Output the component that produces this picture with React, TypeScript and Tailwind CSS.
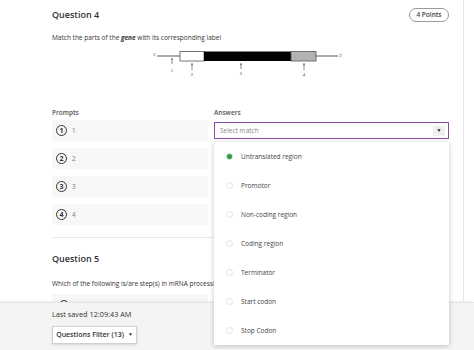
const PROMPTS = ['1', '2', '3', '4'];
const ANSWERS = [
  'Untranslated region',
  'Promotor',
  'Non-coding region',
  'Coding region',
  'Terminator',
  'Start codon',
  'Stop Codon',
];

const GeneDiagram = () => (
  <svg width="196" height="30" viewBox="0 0 196 30" className="ml-[98px] mt-[6px] block">
    <text x="3" y="7" fontSize="4.5" fill="#333" fontFamily="Liberation Serif, serif">5'</text>
    <line x1="7" y1="7" x2="30" y2="7" stroke="#333" strokeWidth="0.8" />
    <rect x="30" y="2.5" width="24" height="9.5" fill="#fff" stroke="#555" strokeWidth="0.8" />
    <rect x="54" y="2.5" width="87" height="9.5" fill="#000" />
    <rect x="141" y="2.5" width="25" height="9.5" fill="#b3b3b3" stroke="#555" strokeWidth="0.8" />
    <line x1="166" y1="7" x2="188" y2="7" stroke="#333" strokeWidth="0.8" />
    <text x="189" y="8" fontSize="4.5" fill="#333" fontFamily="Liberation Serif, serif">3'</text>
    {[
      { x: 22, y1: 9, y2: 15, ly: 23, n: '1' },
      { x: 42, y1: 14, y2: 21, ly: 27, n: '2' },
      { x: 91, y1: 14, y2: 20, ly: 26, n: '3' },
      { x: 154, y1: 14, y2: 21, ly: 27, n: '4' },
    ].map(a => (
      <g key={a.n}>
        <line x1={a.x} y1={a.y1 + 1} x2={a.x} y2={a.y2} stroke="#333" strokeWidth="0.6" />
        <path d={`M${a.x - 1} ${a.y1 + 1.5} L${a.x} ${a.y1} L${a.x + 1} ${a.y1 + 1.5} Z`} fill="#333" />
        <text x={a.x - 1.2} y={a.ly} fontSize="4.5" fill="#333" fontFamily="Liberation Serif, serif">{a.n}</text>
      </g>
    ))}
  </svg>
);

export default function App() {
  return (
    <div className="relative w-[474px] h-[350px] overflow-hidden bg-white text-[#333] font-['Open_Sans',sans-serif]">
      <div className="w-[464px] h-full border-r border-[#e6e6e6] pl-[52px] pr-[14px] pt-[8px]">
        <div className="flex items-center justify-between h-[14px]">
          <h2 className="text-[9px] leading-[14px] font-semibold text-[#333]">Question 4</h2>
          <span className="h-[14px] w-[40px] flex items-center justify-center rounded-full border border-[#9a9a9a] text-[6.5px] leading-none font-semibold text-[#444]">
            4 Points
          </span>
        </div>

        <p className="mt-[11px] text-[6.5px] leading-[10px]">
          Match the parts of the <em className="font-bold">gene</em> with its corresponding label
        </p>

        <GeneDiagram />

        <div className="mt-[29px] grid grid-cols-[156px_235px] gap-x-[6px]">
          <div>
            <div className="text-[6.5px] leading-[10px] font-semibold text-[#555]">Prompts</div>
            <div className="mt-[2px] flex flex-col gap-[7px]">
              {PROMPTS.map(p => (
                <div key={p} className="h-[21px] bg-[#f7f7f7] flex items-center pl-[4px]">
                  <span className="w-[11px] h-[11px] rounded-full border-[1.5px] border-[#333] flex items-center justify-center text-[7px] leading-none font-bold">
                    {p}
                  </span>
                  <span className="ml-[5px] text-[6.5px] text-[#777]">{p}</span>
                </div>
              ))}
            </div>
          </div>

          <div>
            <div className="text-[6.5px] leading-[10px] font-semibold text-[#555]">Answers</div>
            <div className="relative mt-[4px] z-20">
              <div className="h-[17px] border-[1.5px] border-[#8a4aa5] bg-white flex items-center justify-between pl-[5px] pr-[3px]">
                <span className="text-[6.5px] text-[#888]">Select match</span>
                <span className="w-[12px] h-[10px] bg-[#efefef] flex items-center justify-center text-[5px] text-[#111]">▼</span>
              </div>
              <div className="absolute left-0 right-0 top-full mt-[3px] bg-white shadow-[0_1px_5px_rgba(0,0,0,0.22)]">
                {ANSWERS.map((a, i) => (
                  <div key={a} className="h-[29px] flex items-center pl-[12px]">
                    {i === 0 ? (
                      <span className="w-[7px] h-[7px] rounded-full bg-[#c9e6cc] flex items-center justify-center">
                        <span className="w-[5px] h-[5px] rounded-full bg-[#2f9a45]" />
                      </span>
                    ) : (
                      <span className="w-[7px] h-[7px] rounded-full border border-[#e2e2e2]" />
                    )}
                    <span className="ml-[8px] text-[6.5px] text-[#444]">{a}</span>
                  </div>
                ))}
              </div>
            </div>
          </div>
        </div>

        <div className="mt-[12px] border-t border-[#e8e8e8]" />

        <h2 className="mt-[14px] text-[9px] leading-[14px] font-semibold">Question 5</h2>
        <p className="mt-[13px] text-[6.5px] leading-[10px] whitespace-nowrap">
          Which of the following is/are step(s) in mRNA processing?
        </p>
        <div className="mt-[5px] h-[21px] w-[156px] bg-[#f7f7f7] flex items-center pl-[7px]">
          <span className="w-[10px] h-[10px] rounded-full border-[1.5px] border-[#333]" />
        </div>
      </div>

      <div className="absolute left-0 right-0 bottom-0 h-[48px] bg-[#f4f4f4] border-t border-[#e4e4e4] shadow-[0_-1px_3px_rgba(0,0,0,0.06)] pl-[52px] pt-[6px] z-10">
        <div className="text-[7.3px] leading-[10px] text-[#333]">Last saved 12:09:43 AM</div>
        <button className="mt-[7px] h-[18px] w-[85px] bg-white border border-[#cfcfcf] shadow-[0_1px_2px_rgba(0,0,0,0.12)] flex items-center justify-center gap-[4px] text-[7px] font-semibold text-[#333]">
          Questions Filter (13) <span className="text-[5px]">▼</span>
        </button>
      </div>
    </div>
  );
}
